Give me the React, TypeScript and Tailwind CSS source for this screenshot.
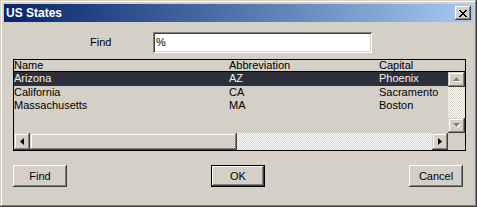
const raised =
  'shadow-[inset_-1px_-1px_0_#404040,inset_1px_1px_0_#ffffff,inset_-2px_-2px_0_#808080,inset_2px_2px_0_#d4d0c8]'
const scrollBtn =
  'shadow-[inset_-1px_-1px_0_#404040,inset_1px_1px_0_#d4d0c8,inset_-2px_-2px_0_#808080,inset_2px_2px_0_#ffffff]'
const dither =
  'bg-[image:repeating-conic-gradient(#d4d0c8_0_25%,#ffffff_0_50%)] bg-size-[2px_2px]'

const STATES = [
  { name: 'Arizona', abbr: 'AZ', capital: 'Phoenix' },
  { name: 'California', abbr: 'CA', capital: 'Sacramento' },
  { name: 'Massachusetts', abbr: 'MA', capital: 'Boston' },
]

function Arrow({ dir, disabled }: { dir: 'up' | 'down' | 'left' | 'right'; disabled?: boolean }) {
  const pts = {
    up: '3.5,0 7,4 0,4',
    down: '0,0 7,0 3.5,4',
    left: '4,0 4,7 0,3.5',
    right: '0,0 4,3.5 0,7',
  }[dir]
  const vertical = dir === 'up' || dir === 'down'
  return (
    <svg width={vertical ? 8 : 5} height={vertical ? 5 : 8} viewBox={vertical ? '0 0 8 5' : '0 0 5 8'}>
      {disabled && <polygon points={pts} fill="#ffffff" transform="translate(1,1)" />}
      <polygon points={pts} fill={disabled ? '#808080' : '#000000'} />
    </svg>
  )
}

function PushButton({ label, isDefault }: { label: string; isDefault?: boolean }) {
  return (
    <div className={isDefault ? 'border border-black' : ''}>
      <button
        className={`${raised} bg-[#d4d0c8] flex items-center justify-center text-black ${
          isDefault ? 'w-[52px] h-[20px]' : 'w-[54px] h-[22px]'
        }`}
      >
        {label}
      </button>
    </div>
  )
}

export default function App() {
  return (
    <div
      className="w-[477px] h-[207px] bg-[#d4d0c8] p-[4px] flex flex-col text-[11px] leading-[13px] text-black shadow-[inset_-1px_-1px_0_#404040,inset_1px_1px_0_#d4d0c8,inset_-2px_-2px_0_#808080,inset_2px_2px_0_#ffffff]"
      style={{ fontFamily: '"Liberation Sans", Arial, sans-serif' }}
    >
      <div className="h-[18px] flex items-center justify-between bg-linear-to-r from-[#0a246a] to-[#a6caf0] pl-[2px] pr-[2px]">
        <span className="text-white font-bold text-[12px]">US States</span>
        <div className={`${raised} bg-[#d4d0c8] w-[16px] h-[14px] flex items-center justify-center`}>
          <svg width="8" height="7" viewBox="0 0 8 7">
            <path d="M0 0L7 7M1 0L8 7M7 0L0 7M8 0L1 7" stroke="#000" strokeWidth="1" shapeRendering="crispEdges" />
          </svg>
        </div>
      </div>

      <div className="mt-[10px] flex items-center h-[21px]">
        <span className="ml-[86px] w-[63px]">Find</span>
        <div className="w-[219px] h-[21px] bg-white pl-[3px] flex items-center shadow-[inset_1px_1px_0_#808080,inset_-1px_-1px_0_#ffffff,inset_2px_2px_0_#404040,inset_-2px_-2px_0_#d4d0c8]">
          %
        </div>
      </div>

      <div className="mt-[6px] ml-[9px] w-[453px] h-[92px] border border-black flex flex-col">
        <div className="h-[12px] border-b border-black flex leading-[11px]">
          <span className="w-[215px]">Name</span>
          <span className="w-[150px]">Abbreviation</span>
          <span>Capital</span>
        </div>
        <div className="flex-1 flex">
          <div className="flex-1 flex flex-col">
            <div className="flex-1">
              {STATES.map((s, i) => (
                <div
                  key={s.abbr}
                  className={`h-[13px] flex ${i === 0 ? 'bg-[#2d303b] text-[#f0f0f0] h-[14px]' : ''}`}
                >
                  <span className="w-[215px]">{s.name}</span>
                  <span className="w-[150px]">{s.abbr}</span>
                  <span>{s.capital}</span>
                </div>
              ))}
            </div>
            <div className="h-[17px] flex">
              <div className={`${scrollBtn} w-[16px] bg-[#d4d0c8] flex items-center justify-center`}>
                <Arrow dir="left" />
              </div>
              <div className={`${scrollBtn} w-[207px] bg-[#d4d0c8]`} />
              <div className={`flex-1 ${dither}`} />
              <div className={`${scrollBtn} w-[16px] bg-[#d4d0c8] flex items-center justify-center`}>
                <Arrow dir="right" />
              </div>
            </div>
          </div>
          <div className="w-[17px] flex flex-col">
            <div className={`${scrollBtn} h-[15px] bg-[#d4d0c8] flex items-center justify-center`}>
              <Arrow dir="up" disabled />
            </div>
            <div className={`flex-1 ${dither}`} />
            <div className={`${scrollBtn} h-[15px] bg-[#d4d0c8] flex items-center justify-center`}>
              <Arrow dir="down" disabled />
            </div>
            <div className="h-[17px] bg-[#d4d0c8]" />
          </div>
        </div>
      </div>

      <div className="mt-[14px] pl-[9px] pr-[10px] flex justify-between">
        <PushButton label="Find" />
        <PushButton label="OK" isDefault />
        <PushButton label="Cancel" />
      </div>
    </div>
  )
}
